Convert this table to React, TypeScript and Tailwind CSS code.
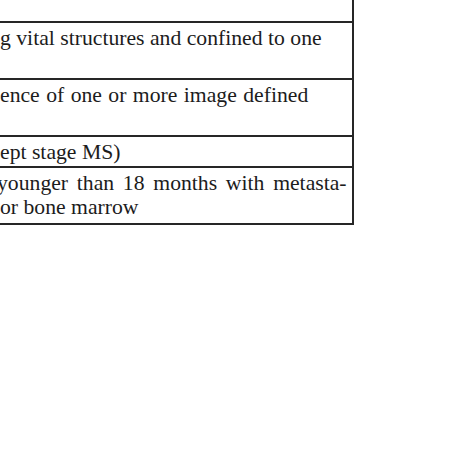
import React from "react";

type Line = { text: string; cls: string };

const Row = ({ h, lines }: { h: string; lines: Line[] }) => (
  <div className={`${h} border-b-2 border-[#262626] pt-[3px] overflow-hidden`}>
    {lines.map((l, i) => (
      <div key={i} className={`${l.cls} whitespace-nowrap leading-[24px]`}>
        {l.text}
      </div>
    ))}
  </div>
);

export default function App() {
  return (
    <div className="w-[474px] h-[474px] bg-white overflow-hidden">
      <div
        className="w-[354px] border-r-2 border-[#262626] text-[21.7px] text-[#1c1c1c] flex flex-col"
        style={{ fontFamily: '"Liberation Serif", "Times New Roman", serif' }}
      >
        <Row h="h-[23px]" lines={[]} />
        <Row h="h-[57px]" lines={[{ text: "g vital structures and confined to one", cls: "ml-0" }]} />
        <Row
          h="h-[57px]"
          lines={[{ text: "ence of one or more image defined", cls: "ml-0 [word-spacing:1px]" }]}
        />
        <Row h="h-[31px]" lines={[{ text: "ept stage MS)", cls: "ml-0" }]} />
        <Row
          h="h-[57px]"
          lines={[
            { text: "younger than 18 months with metasta-", cls: "-ml-[3px] [word-spacing:3.3px]" },
            { text: "or bone marrow", cls: "ml-0" },
          ]}
        />
      </div>
    </div>
  );
}
